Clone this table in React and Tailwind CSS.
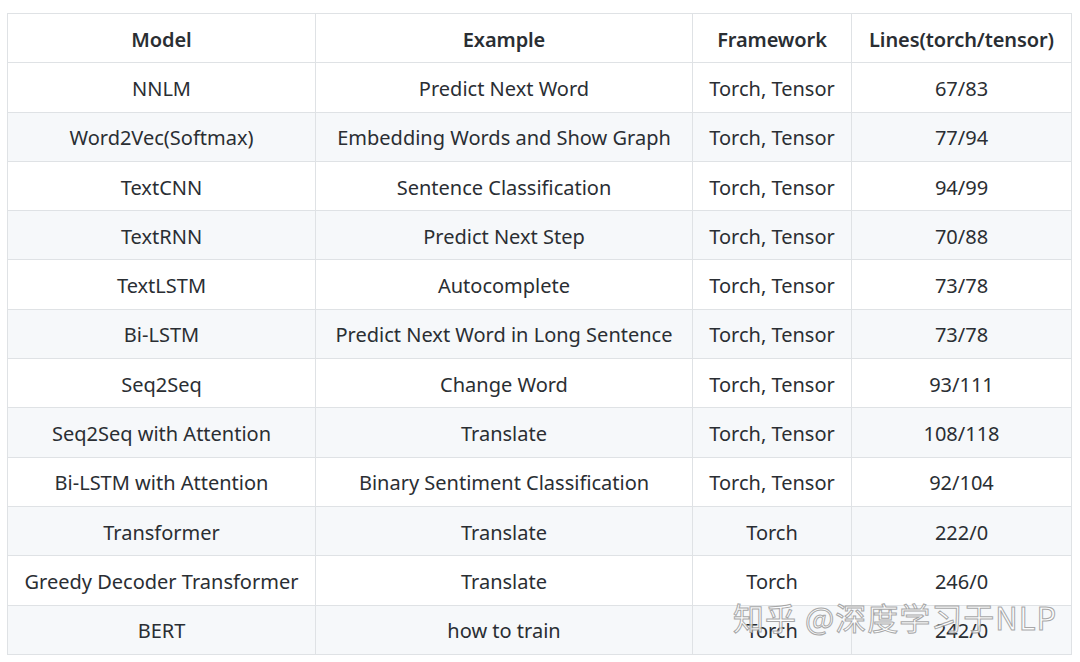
import React from "react";

const rows = [
  ["NNLM", "Predict Next Word", "Torch, Tensor", "67/83"],
  ["Word2Vec(Softmax)", "Embedding Words and Show Graph", "Torch, Tensor", "77/94"],
  ["TextCNN", "Sentence Classification", "Torch, Tensor", "94/99"],
  ["TextRNN", "Predict Next Step", "Torch, Tensor", "70/88"],
  ["TextLSTM", "Autocomplete", "Torch, Tensor", "73/78"],
  ["Bi-LSTM", "Predict Next Word in Long Sentence", "Torch, Tensor", "73/78"],
  ["Seq2Seq", "Change Word", "Torch, Tensor", "93/111"],
  ["Seq2Seq with Attention", "Translate", "Torch, Tensor", "108/118"],
  ["Bi-LSTM with Attention", "Binary Sentiment Classification", "Torch, Tensor", "92/104"],
  ["Transformer", "Translate", "Torch", "222/0"],
  ["Greedy Decoder Transformer", "Translate", "Torch", "246/0"],
  ["BERT", "how to train", "Torch", "242/0"],
];

const cell = "border border-[#dfe2e5] text-center align-middle pt-[3px] pb-0 px-0 h-[49.3px]";

export default function App() {
  return (
    <div className="w-[1080px] h-[662px] bg-white pt-[13px] pl-[7px] relative overflow-hidden" style={{ fontFamily: '"Noto Sans", "Open Sans", sans-serif' }}>
      <table className="border-collapse table-fixed w-[1064px] text-[20px] text-[#2a2e33]">
        <colgroup>
          <col className="w-[308px]" />
          <col className="w-[377px]" />
          <col className="w-[159px]" />
          <col className="w-[220px]" />
        </colgroup>
        <thead>
          <tr className="bg-white">
            <th className={cell + " font-semibold tracking-[-0.1px]"}>Model</th>
            <th className={cell + " font-semibold tracking-[-0.1px]"}>Example</th>
            <th className={cell + " font-semibold tracking-[-0.1px]"}>Framework</th>
            <th className={cell + " font-semibold tracking-[-0.1px]"}>Lines(torch/tensor)</th>
          </tr>
        </thead>
        <tbody>
          {rows.map((r, i) => (
            <tr key={i} className={i % 2 === 0 ? "bg-white" : "bg-[#f6f8fa]"}>
              {r.map((c, j) => (
                <td key={j} className={cell}>{c}</td>
              ))}
            </tr>
          ))}
        </tbody>
      </table>
      <div
        className="absolute left-[733px] top-[601px] text-[31px] leading-none text-white whitespace-nowrap tracking-[1px]"
        style={{ fontFamily: '"Noto Sans CJK SC", "Noto Sans", sans-serif', WebkitTextStroke: "1px #9a9a9a", opacity: 0.85 }}
      >
        知乎 @深度学习于NLP
      </div>
    </div>
  );
}
